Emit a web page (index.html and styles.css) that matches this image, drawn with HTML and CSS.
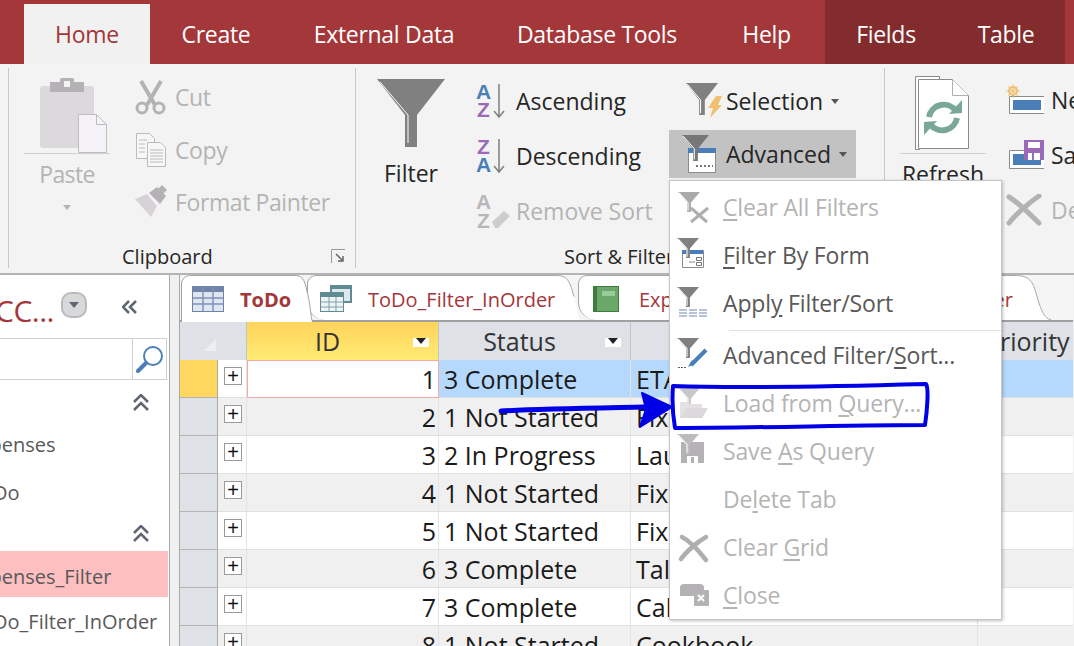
FILE: index.html
```html
<!DOCTYPE html>
<html lang="en">
<head>
<meta charset="utf-8">
<title>Access - ToDo</title>
<link rel="stylesheet" href="styles.css">
</head>
<body>
<svg class="defs" aria-hidden="true">
  <symbol id="funnel" viewBox="0 0 68 68" preserveAspectRatio="none">
    <polygon points="0,0 68,0 40,36 40,68 28,68 28,36" fill="currentColor"/>
    <polyline points="3,3 31,36 31,64" fill="none" stroke="#fff" stroke-width="1" vector-effect="non-scaling-stroke"/>
  </symbol>
</svg>
<div class="app">
  <nav class="tabbar">
    <a class="tabbar-item tabbar-home">Home</a>
    <a class="tabbar-item tabbar-create">Create</a>
    <a class="tabbar-item tabbar-ext">External Data</a>
    <a class="tabbar-item tabbar-db">Database Tools</a>
    <a class="tabbar-item tabbar-help">Help</a>
    <div class="tabbar-context">
      <a class="tabbar-item tabbar-fields">Fields</a>
      <a class="tabbar-item tabbar-table">Table</a>
    </div>
  </nav>

  <section class="ribbon">
    <div class="group group-clip">
      <div class="group-body">
        <div class="paste">
          <div class="paste-icon">
            <svg width="70" height="78" viewBox="0 0 70 78"><rect x="1" y="10" width="54" height="62" rx="3" fill="#dcd9dc"/><path d="M11 6h10V3a3 3 0 0 1 3-1h8a3 3 0 0 1 3 1v3h10v10H11z" fill="#b5b2b5"/><rect x="25" y="5" width="6" height="6" fill="#f3f3f3"/><path d="M39.500 38.500h18l10 10v28h-28z" fill="#f5f3f7" stroke="#bdbdbd"/><path d="M57.500 38.500v10h10" fill="none" stroke="#bdbdbd"/></svg>
          </div>
          <span class="paste-label">Paste</span>
          <span class="caret caret-light"></span>
        </div>
        <div class="small-col">
          <div class="small-btn disabled">
            <svg class="small-icon" width="32" height="36" viewBox="0 0 32 36"><g fill="none" stroke="#b5b2b5"><path d="M6 2l14 24M26 2L12 26" stroke-width="4"/><circle cx="7" cy="29" r="5" stroke-width="3"/><circle cx="24" cy="29" r="5" stroke-width="3"/></g></svg>
            <span>Cut</span>
          </div>
          <div class="small-btn disabled">
            <svg class="small-icon" width="32" height="36" viewBox="0 0 32 36"><g fill="#f7f7f7" stroke="#bdb9bd"><path d="M1.500 1.500h13l5 5v20h-18z"/><path d="M12.500 10.500h13l5 5v19h-18z"/><path d="M4 8h8M4 12h6M4 16h6M4 20h6M15 18h13M15 21h13M15 24h13M15 27h13M15 30h13" fill="none"/></g></svg>
            <span>Copy</span>
          </div>
          <div class="small-btn disabled">
            <svg class="small-icon" width="32" height="36" viewBox="0 0 32 36"><path d="M0 15l12-5 10 12-6 11z" fill="#d6d2d6"/><path d="M14 9l8-6 9 9-6 8z" fill="#b5b2b5"/><path d="M22 6l5-5 5 5-5 5z" fill="#b5b2b5"/></svg>
            <span>Format Painter</span>
          </div>
        </div>
      </div>
      <div class="group-foot foot-clip">
        <span class="foot-label">Clipboard</span>
        <svg class="launcher" width="15" height="15" viewBox="0 0 15 15"><path d="M.5 14V.5H14" fill="none" stroke="#9a9a9a"/><path d="M5 5l6 6M12 7v5H7" fill="none" stroke="#666" stroke-width="1.500"/></svg>
      </div>
    </div>

    <div class="group group-sort">
      <div class="group-body">
        <div class="filter-col">
          <svg class="filter-big" width="68" height="68"><use href="#funnel"/></svg>
          <span>Filter</span>
        </div>
        <div class="sort-col">
          <div class="sort-btn">
            <svg class="small-icon" width="30" height="38" viewBox="0 0 30 38"><text x="0" y="17" class="az az-blue">A</text><text x="1" y="35" class="az az-purple">Z</text><path d="M23 2v33M18 29l5 6 5-6" fill="none" stroke="#808080" stroke-width="1.500"/></svg>
            <span>Ascending</span>
          </div>
          <div class="sort-btn">
            <svg class="small-icon" width="30" height="38" viewBox="0 0 30 38"><text x="1" y="17" class="az az-purple">Z</text><text x="0" y="35" class="az az-blue">A</text><path d="M23 2v33M18 29l5 6 5-6" fill="none" stroke="#808080" stroke-width="1.500"/></svg>
            <span>Descending</span>
          </div>
          <div class="sort-btn disabled">
            <svg class="small-icon sort-wide" width="34" height="38" viewBox="0 0 34 38"><text x="0" y="17" class="az az-grey">A</text><text x="1" y="36" class="az az-grey">Z</text><path d="M16 30l12-11 6 5-12 12h-3z" fill="#cfcccf"/></svg>
            <span>Remove Sort</span>
          </div>
        </div>
        <div class="adv-col">
          <div class="adv-btn">
            <svg class="adv-icon" width="36" height="36" viewBox="0 0 36 36"><svg x="0" y="0" width="32" height="32" color="#808080"><use href="#funnel"/></svg><polygon points="30,13 36,13 32,22 36,22 24,35 27,25 22,25" fill="#f0c070"/></svg>
            <span>Selection</span><span class="caret"></span>
          </div>
          <div class="adv-btn active">
            <svg class="adv-icon" width="34" height="38" viewBox="0 0 34 38"><path d="M6.500 13.500h27v24h-27z" fill="#fff" stroke="#8a8a8a"/><rect x="6" y="13" width="28" height="5" fill="#4a7eb8"/><path d="M14 31h17" stroke="#777" stroke-width="2" stroke-dasharray="2 2"/><svg x="0" y="0" width="27" height="26" color="#777"><use href="#funnel"/></svg></svg>
            <span>Advanced</span><span class="caret"></span>
          </div>
        </div>
      </div>
      <div class="group-foot foot-sort"><span class="foot-label">Sort &amp; Filter</span></div>
    </div>

    <div class="group group-rec">
      <div class="group-body">
        <div class="refresh-col">
          <div class="refresh-icon">
            <svg width="56" height="74" viewBox="0 0 56 74"><path d="M.5.500h24v3H4.500v70h-4z" fill="#fff" stroke="#8a8a8a"/><path d="M3.500 3.500h34l16 16v53h-50z" fill="#fff" stroke="#8a8a8a"/><path d="M37.500 3.500v16h16" fill="#fff" stroke="#b0b0b0"/><g fill="none" stroke="#7aa898" stroke-width="6"><path d="M14 41a15 15 0 0 1 27-6"/><path d="M42 42a15 15 0 0 1-27 6"/></g><path d="M34 38l13-1V24z" fill="#7aa898"/><path d="M22 45l-13 1v13z" fill="#7aa898"/></svg>
          </div>
          <span>Refresh</span>
        </div>
        <div class="rec-col">
          <div class="rec-btn">
            <svg class="rec-icon" width="38" height="32" viewBox="0 0 38 32"><path d="M3.500 12.500h35v17h-35z" fill="#fff" stroke="#8a8a8a"/><rect x="7" y="16" width="28" height="10" fill="#4a7eb8"/><circle cx="7" cy="7" r="4" fill="none" stroke="#f0c070" stroke-width="2"/><path d="M7 0v14M0 7h14M2 2l10 10M12 2L2 12" stroke="#f0c070"/></svg>
            <span>New</span>
          </div>
          <div class="rec-btn">
            <svg class="rec-icon" width="38" height="32" viewBox="0 0 38 32"><path d="M3.500 11.500h35v18h-35z" fill="#fff" stroke="#8a8a8a"/><rect x="7" y="15" width="28" height="11" fill="#4a7eb8"/><path d="M18 1h20v20H18z" fill="#9a6ab8"/><rect x="22" y="3" width="12" height="6" fill="#fff"/><rect x="22" y="14" width="12" height="7" fill="#fff"/><rect x="26" y="14" width="2" height="7" fill="#9a6ab8"/></svg>
            <span>Save</span>
          </div>
          <div class="rec-btn disabled">
            <svg class="rec-icon" width="38" height="32" viewBox="0 0 38 32"><path d="M3 3c10 6 20 16 30 26M33 2C24 8 10 20 3 29" fill="none" stroke="#b5b2b5" stroke-width="5" stroke-linecap="round"/></svg>
            <span>Delete</span>
          </div>
        </div>
      </div>
    </div>
  </section>

  <div class="workspace">
    <aside class="nav">
      <div class="nav-head">
        <span class="nav-title">CC...</span>
        <span class="nav-drop"><span class="nav-drop-tri"></span></span>
        <svg class="nav-collapse" width="16" height="14" viewBox="0 0 16 14"><path d="M7 1L1 7l6 6M14 1L8 7l6 6" fill="none" stroke="#5f6672" stroke-width="2.500"/></svg>
      </div>
      <div class="nav-search">
        <span class="nav-search-input"></span>
        <span class="nav-search-btn">
          <svg width="28" height="28" viewBox="0 0 28 28"><circle cx="17" cy="11" r="9" fill="none" stroke="#4a7eb8" stroke-width="2"/><path d="M10 18L2 26" stroke="#4a7eb8" stroke-width="4" stroke-linecap="round"/></svg>
        </span>
      </div>
      <div class="nav-section">
        <svg width="16" height="17" viewBox="0 0 16 17"><path d="M1 8l7-7 7 7M1 16l7-7 7 7" fill="none" stroke="#5f6672" stroke-width="2.500"/></svg>
      </div>
      <div class="nav-item"><span class="clip-a">Expenses</span></div>
      <div class="nav-item"><span class="clip-b">ToDo</span></div>
      <div class="nav-section nav-section-2">
        <svg width="16" height="17" viewBox="0 0 16 17"><path d="M1 8l7-7 7 7M1 16l7-7 7 7" fill="none" stroke="#5f6672" stroke-width="2.500"/></svg>
      </div>
      <div class="nav-item selected"><span class="clip-a">Expenses_Filter</span></div>
      <div class="nav-item"><span class="clip-b">ToDo_Filter_InOrder</span></div>
    </aside>
    <main class="main">
      <div class="doc-tabs">
        <div class="doc-tab active tab-1">
          <svg class="doc-icon" width="32" height="26" viewBox="0 0 32 26"><rect width="32" height="26" fill="#6d83a8"/><path d="M1 6h30v19H1z" fill="#dfe6f2"/><path d="M1 12h30M1 18h30M11 1v24M21 1v24" stroke="#7f94b6" stroke-width="1.500"/></svg>
          <span class="doc-name">ToDo</span>
          <svg class="doc-curve" width="18" height="47" viewBox="0 0 18 47"><path d="M0 .5c9 0 10 7 13 20 3 13 3 26.500 5 26.500H0z" fill="#fff"/><path d="M0 .5c9 0 10 7 13 20 3 13 3 26 5 26" fill="none" stroke="#a8a296"/></svg>
        </div>
        <div class="doc-tab tab-2">
          <svg class="doc-icon" width="32" height="30" viewBox="0 0 32 30"><rect x="10" y="1" width="22" height="18" fill="#5f8c93"/><rect x="12" y="5" width="18" height="12" fill="#dce8ea"/><rect y="8" width="24" height="20" fill="#5f8c93"/><path d="M1 13h22v14H1z" fill="#eef3f4"/><path d="M1 18h22M1 23h22M9 13v14M16 13v14" stroke="#7da3a9"/></svg>
          <span class="doc-name">ToDo_Filter_InOrder</span>
          <svg class="doc-curve" width="24" height="45" viewBox="0 0 24 45"><path d="M0 .5c12 0 13 8 17 21 3 11 4 23.500 7 23.500H0z" fill="#fff"/><path d="M0 .5c12 0 13 8 17 21" fill="none" stroke="#a8a8a8"/></svg>
        </div>
        <div class="doc-tab tab-3">
          <svg class="doc-icon" width="26" height="26" viewBox="0 0 26 26"><rect width="26" height="26" fill="#3f7a3f"/><rect x="4" y="1" width="21" height="24" fill="#6aa86a"/><rect x="9" y="5" width="13" height="5" fill="#9acb9a"/></svg>
          <span class="doc-name">Exp</span>
          <span class="doc-name doc-name-end">er</span>
          <svg class="doc-curve" width="36" height="45" viewBox="0 0 36 45"><path d="M0 .5c10 0 16 2 20 14 4 14 8 30.500 16 30.500H0z" fill="#fff"/><path d="M0 .5c10 0 16 2 20 14 4 14 8 30 16 30" fill="none" stroke="#a8a8a8"/></svg>
        </div>
      </div>
      <table class="grid">
        <colgroup><col class="c-sel"><col class="c-exp"><col class="c-id"><col class="c-status"><col class="c-title"><col class="c-pri"></colgroup>
        <thead>
          <tr>
            <th class="sel-head" colspan="2"><svg class="corner" width="12" height="12" viewBox="0 0 12 12"><path d="M12 0v12H0z" fill="#eceef1"/></svg></th>
            <th class="id-head"><span>ID</span><span class="filter-tri"></span></th>
            <th><span>Status</span><span class="filter-tri"></span></th>
            <th></th>
            <th class="pri-head">Priority</th>
          </tr>
        </thead>
        <tbody>
          <tr class="current"><td class="sel"></td><td class="exp"><span class="plus">+</span></td><td class="num">1</td><td>3 Complete</td><td>ETA</td><td></td></tr>
          <tr><td class="sel"></td><td class="exp"><span class="plus">+</span></td><td class="num">2</td><td>1 Not Started</td><td>Fix</td><td></td></tr>
          <tr><td class="sel"></td><td class="exp"><span class="plus">+</span></td><td class="num">3</td><td>2 In Progress</td><td>Lau</td><td></td></tr>
          <tr><td class="sel"></td><td class="exp"><span class="plus">+</span></td><td class="num">4</td><td>1 Not Started</td><td>Fix</td><td></td></tr>
          <tr><td class="sel"></td><td class="exp"><span class="plus">+</span></td><td class="num">5</td><td>1 Not Started</td><td>Fix</td><td></td></tr>
          <tr><td class="sel"></td><td class="exp"><span class="plus">+</span></td><td class="num">6</td><td>3 Complete</td><td>Tal</td><td></td></tr>
          <tr><td class="sel"></td><td class="exp"><span class="plus">+</span></td><td class="num">7</td><td>3 Complete</td><td>Cal</td><td></td></tr>
          <tr><td class="sel"></td><td class="exp"><span class="plus">+</span></td><td class="num">8</td><td>1 Not Started</td><td>Cookbook</td><td></td></tr>
        </tbody>
      </table>
    </main>
  </div>

  <div class="menu">
    <div class="menu-item disabled">
      <svg class="menu-icon" width="34" height="40" viewBox="0 0 34 40"><svg x="1" y="4" width="22" height="20" color="#aaa"><use href="#funnel"/></svg><path d="M14 20l16 14M31 20L14 34" stroke="#b0aeb0" stroke-width="3"/></svg>
      <span><u>C</u>lear All Filters</span>
    </div>
    <div class="menu-item">
      <svg class="menu-icon" width="34" height="40" viewBox="0 0 34 40"><path d="M5.500 14.500h21v17h-21z" fill="#fff" stroke="#8a8a8a"/><rect x="5" y="14" width="21" height="4" fill="#4a7eb8"/><path d="M12 26h6" stroke="#888"/><path d="M19.500 21.500h5v3h-5zM19.500 26.500h5v3h-5z" fill="#fff" stroke="#777"/><svg x="0" y="2" width="22" height="20" color="#808080"><use href="#funnel"/></svg></svg>
      <span><u>F</u>ilter By Form</span>
    </div>
    <div class="menu-item">
      <svg class="menu-icon" width="34" height="40" viewBox="0 0 34 40"><svg x="0" y="3" width="22" height="20" color="#808080"><use href="#funnel"/></svg><path d="M2 26h8M12 26h8M22 26h8M2 29h8M12 29h8M22 29h8M2 32h8M12 32h8M22 32h8" stroke="#6a87b0"/></svg>
      <span>Appl<u>y</u> Filter/Sort</span>
    </div>
    <div class="menu-sep"></div>
    <div class="menu-item">
      <svg class="menu-icon" width="34" height="40" viewBox="0 0 34 40"><svg x="0" y="2" width="22" height="20" color="#808080"><use href="#funnel"/></svg><path d="M29 14L14 29" stroke="#4a7eb8" stroke-width="4"/><path d="M15 24l-4 7 7-3z" fill="#4a7eb8"/><path d="M1 31.500h9" stroke="#666" stroke-dasharray="2 1"/></svg>
      <span>Advanced Filter/<u>S</u>ort...</span>
    </div>
    <div class="menu-item disabled">
      <svg class="menu-icon" width="34" height="40" viewBox="0 0 34 40"><svg x="1" y="4" width="22" height="20" color="#c8c8c8"><use href="#funnel"/></svg><path d="M3 18h8l2 2h12v4H9l-6 10z" fill="#e4e0e4"/><path d="M9 24h22l-6 10H3z" fill="#dcd8dc"/></svg>
      <span>Load from <u>Q</u>uery...</span>
    </div>
    <div class="menu-item disabled">
      <svg class="menu-icon" width="34" height="40" viewBox="0 0 34 40"><path d="M4 10h23v21H4z" fill="#b5b2b5"/><rect x="10" y="24" width="11" height="7" fill="#fff"/><rect x="14" y="25" width="3" height="6" fill="#b5b2b5"/><svg x="0" y="2" width="22" height="20" color="#bdbbbd"><use href="#funnel"/></svg></svg>
      <span>Save <u>A</u>s Query</span>
    </div>
    <div class="menu-item disabled">
      <span class="menu-icon-empty"></span>
      <span>De<u>l</u>ete Tab</span>
    </div>
    <div class="menu-item disabled">
      <svg class="menu-icon" width="34" height="40" viewBox="0 0 34 40"><path d="M5 9c8 4 17 14 24 23M29 9C20 14 9 24 4 31" fill="none" stroke="#b0aeb0" stroke-width="4.500" stroke-linecap="round"/></svg>
      <span>Clear <u>G</u>rid</span>
    </div>
    <div class="menu-item disabled">
      <svg class="menu-icon" width="34" height="40" viewBox="0 0 34 40"><path d="M3 12a4 4 0 0 1 4-4h16a4 4 0 0 1 4 4v2h-6v6H3z" fill="#b5b2b5"/><rect x="17" y="14" width="15" height="16" rx="1" fill="#b5b2b5"/><path d="M21 19l6 6M27 19l-6 6" stroke="#fff" stroke-width="2"/></svg>
      <span><u>C</u>lose</span>
    </div>
  </div>

  <svg class="annotation" width="1074" height="646" viewBox="0 0 1074 646">
    <path d="M501 411C540 409 600 408 645 407" fill="none" stroke="#0000e6" stroke-width="5" stroke-linecap="round"/>
    <path d="M642 393l30 14-32 20 6-18z" fill="#0000e6" stroke="#0000e6" stroke-width="2" stroke-linejoin="round"/>
    <path d="M673 386c60 2 180 0 253-2 3 4 1 28-1 41-60 0-180 3-250 3-2-12-3-30-2-42z" fill="none" stroke="#0000e6" stroke-width="4" stroke-linejoin="round"/>
  </svg>
</div>
</body>
</html>
```
FILE: styles.css
```css
* { box-sizing: border-box; }
html, body { margin: 0; padding: 0; }
body { font-family: "Open Sans", "Noto Sans", sans-serif; color: #262626; background: #fff; }
.defs { display: none; }
.app { position: relative; width: 1074px; height: 646px; overflow: hidden; display: flex; flex-direction: column; font-size: 23px; }

/* Title tabs */
.tabbar { flex: none; height: 64px; background: #a4373a; display: flex; align-items: flex-end; color: #fff; letter-spacing: -.3px; }
.tabbar-item { flex: none; display: flex; align-items: center; justify-content: center; height: 60px; }
.tabbar-home { margin-left: 24px; width: 126px; background: #f1f1f1; color: #a4373a; }
.tabbar-create { width: 132px; }
.tabbar-ext { width: 204px; }
.tabbar-db { width: 222px; }
.tabbar-help { width: 117px; }
.tabbar-context { flex: none; display: flex; align-self: stretch; align-items: flex-end; background: #822c2e; width: 240px; }
.tabbar-fields { width: 122px; }
.tabbar-table { width: 118px; }

/* Ribbon */
.ribbon { flex: none; height: 211px; background: #f3f3f3; border-bottom: 2px solid #b4b4b4; display: flex; padding: 4px 0 5px 8px; }
.group { flex: none; display: flex; flex-direction: column; border-left: 1px solid #c8c8c8; }
.group-clip { width: 347px; }
.group-sort { width: 529px; }
.group-rec { width: 190px; }
.group-body { flex: 1; display: flex; min-height: 0; }
.group-foot { flex: none; height: 24px; display: flex; align-items: center; font-size: 20px; }
.foot-clip { padding-left: 113px; }
.foot-sort { padding-left: 208px; }
.launcher { margin-left: 118px; }
.disabled { color: #b4b4b4; }
.small-icon { flex: none; }

.paste { width: 86px; margin-left: 15px; display: flex; flex-direction: column; align-items: center; color: #b4b4b4; }
.paste-icon { width: 86px; height: 86px; padding: 8px 0 0 15px; border-bottom: 1px solid #d0d0d0; display: flex; }
.paste-label { margin-top: 3px; line-height: 34px; letter-spacing: -.6px; }
.caret { flex: none; width: 0; height: 0; border: 4px solid transparent; border-top: 5px solid #555; border-bottom: 0; }
.caret-light { border-top-color: #b4b4b4; margin-top: 14px; }

.small-col { margin-left: 25px; padding-top: 3px; display: flex; flex-direction: column; letter-spacing: -.4px; }
.small-btn { height: 52.500px; display: flex; align-items: center; gap: 8px; }

.filter-col { flex: none; width: 120px; padding: 11px 0 0 21px; display: flex; flex-direction: column; align-items: flex-start; }
.filter-big { color: #808080; }
.filter-col span { width: 68px; text-align: center; margin-top: 9px; line-height: 34px; }
.sort-col { flex: none; width: 193px; padding-top: 5px; display: flex; flex-direction: column; }
.sort-btn { height: 55px; display: flex; align-items: center; gap: 10px; }
.sort-wide { margin-right: -4px; }
.az { font: 700 21px "Liberation Sans", sans-serif; }
.az-blue { fill: #4a7eb8; }
.az-purple { fill: #9a6ab8; }
.az-grey { fill: #b9b6b9; }
.adv-col { flex: none; width: 187px; padding-top: 7px; display: flex; flex-direction: column; gap: 3px; }
.adv-btn { height: 52px; display: flex; align-items: center; padding-left: 17px; }
.adv-btn.active { height: 48px; background: #c2c2c2; padding-left: 13px; }
.adv-icon { flex: none; margin-right: 4px; }
.adv-btn.active .adv-icon { margin-right: 10px; }
.adv-btn .caret { margin-left: 8px; }

.refresh-col { width: 86px; margin-left: 15px; display: flex; flex-direction: column; align-items: center; }
.refresh-icon { width: 86px; height: 86px; padding: 8px 0 0 15px; border-bottom: 1px solid #d0d0d0; display: flex; }
.refresh-col span { line-height: 40px; }
.rec-col { margin-left: 20px; padding-top: 4px; display: flex; flex-direction: column; }
.rec-btn { height: 55px; display: flex; align-items: center; gap: 7px; white-space: nowrap; }
.rec-icon { flex: none; }

/* Workspace */
.workspace { flex: 1; min-height: 0; display: flex; background: #f0f0f0; }
.nav { flex: none; width: 170px; background: #fff; border-right: 1px solid #a8a8a8; display: flex; flex-direction: column; overflow: hidden; color: #595959; font-size: 20px; }
.nav-head { flex: none; height: 63px; display: flex; align-items: center; }
.nav-title { font-size: 30px; color: #a4373a; margin-left: -5px; margin-top: 8px; width: 66px; white-space: nowrap; letter-spacing: -.5px; }
.nav-drop { flex: none; width: 26px; height: 26px; border-radius: 10px; background: #d8d9db; border: 2px solid #b8babd; display: flex; align-items: center; justify-content: center; margin-top: -3px; }
.nav-drop-tri { width: 0; height: 0; border: 5px solid transparent; border-top: 6px solid #5f6672; border-bottom: 0; }
.nav-collapse { flex: none; margin-left: 35px; }
.nav-search { flex: none; height: 42px; width: 167px; border: 1px solid #d0d0d0; border-left: 0; display: flex; }
.nav-search-input { width: 133px; border-right: 1px solid #d0d0d0; }
.nav-search-btn { flex: 1; display: flex; align-items: center; justify-content: center; }
.nav-section { flex: none; height: 40px; display: flex; align-items: flex-start; padding: 14px 0 0 133px; }
.nav-section-2 { height: 35px; padding-top: 9px; }
.nav-item { flex: none; height: 48px; display: flex; align-items: center; white-space: nowrap; }
.nav-item.selected { background: #fdbfc0; height: 46px; width: 168px; padding-top: 4px; }
.clip-a { margin-left: -32px; }
.clip-b { margin-left: -30px; }

.main { flex: none; width: 894px; margin-left: 9px; border-left: 1px solid #a8a8a8; display: flex; flex-direction: column; overflow: hidden; position: relative; }
.doc-tabs { flex: none; height: 47px; background: #f5f5f5; border-bottom: 2px solid #a0a0a0; display: flex; align-items: flex-start; padding-left: 1px; color: #a4373a; font-size: 20px; }
.doc-tab { flex: none; position: relative; display: flex; align-items: center; height: 45px; padding-top: 2px; background: #fff; border-top: 1px solid #a8a8a8; border-left: 1px solid #a8a2a0; border-radius: 9px 0 0 18px; white-space: nowrap; }
.doc-tab.active { height: 47px; padding-top: 0; border-radius: 9px 0 0 0; z-index: 3; }
.doc-curve { position: absolute; left: 100%; top: -1px; }
.doc-icon { flex: none; }
.tab-1 { width: 114px; padding-left: 10px; }
.tab-1 .doc-name { font-weight: 700; margin-left: 16px; }
.tab-2 { width: 250px; margin-left: 12px; padding-left: 12px; z-index: 2; }
.tab-2 .doc-name { margin-left: 16px; }
.tab-3 { width: 437px; margin-left: 21px; padding-left: 14px; padding-right: 2px; z-index: 1; }
.tab-3 .doc-name { margin-left: 20px; }
.tab-3 .doc-name-end { margin-left: auto; }

.grid { flex: none; table-layout: fixed; border-collapse: separate; border-spacing: 0; width: 898px; font-size: 25px; color: #1a1a1a; }
.c-sel { width: 38px; }
.c-exp { width: 29px; }
.c-id, .c-status { width: 192px; }
.c-title { width: 347px; }
.c-pri { width: 100px; }
.grid th { height: 38px; padding: 0 30px 0 0; background: #dee1e6; font-weight: 400; color: #333; border-right: 1px solid #c0c3c8; position: relative; }
.grid th.sel-head { padding: 0; background: #dee1e6; text-align: right; vertical-align: bottom; }
.corner { margin: 0 30px 2px 0; }
.grid th.id-head { background: linear-gradient(#ffd35c, #ffeb72); }
.grid th.pri-head { padding: 0 0 0 7px; text-align: left; border-right: 0; }
.filter-tri { position: absolute; right: 9px; top: 16px; width: 16px; height: 9px; background: #fff; display: flex; justify-content: center; }
.filter-tri::before { content: ""; width: 0; height: 0; border: 5px solid transparent; border-top: 6px solid #222; border-bottom: 0; }
.grid td { height: 38px; padding: 0 0 0 5px; background: #fff; border-right: 1px solid #e4e4e4; border-bottom: 1px solid #e0e0e0; white-space: nowrap; overflow: hidden; line-height: 36px; }
.grid tbody tr:nth-child(even) td { background: #f0f0f0; }
.grid td.sel, .grid tbody tr:nth-child(even) td.sel { background: #dee1e6; border-right: 1px solid #a8a8a8; border-bottom: 1px solid #b4b4b4; padding: 0; }
.grid td.exp { padding: 0 0 0 6px; line-height: 0; vertical-align: top; }
.grid td.num { text-align: right; padding: 0 2px 0 0; }
.grid tr.current td { background: #b5d8fd; }
.grid tr.current td.sel { background: #ffd75e; }
.grid tr.current td.exp { background: #fff; }
.grid tr.current td.num { background: #fff; border: 1px solid #f9a8a8; }
.plus { display: inline-flex; align-items: center; justify-content: center; width: 18px; height: 18px; margin-top: 7px; border: 1px solid #9a9a9a; background: #fff; font: 400 20px/1 "Liberation Sans", sans-serif; color: #111; }

/* Dropdown */
.menu { position: absolute; left: 669px; top: 180px; width: 333px; height: 440px; background: #fff; border: 1px solid #c6c6c6; box-shadow: 1px 1px 3px rgba(0, 0, 0, .25); padding-top: 3px; color: #595959; display: flex; flex-direction: column; z-index: 5; letter-spacing: -.15px; }
.menu-item { flex: none; height: 48px; display: flex; align-items: center; gap: 12px; padding-left: 7px; white-space: nowrap; }
.menu-item > span { margin-top: -2px; }
.menu-item.disabled { color: #b4b4b4; }
.menu-icon, .menu-icon-empty { flex: none; width: 34px; height: 40px; }
.menu-sep { flex: none; height: 4px; margin-left: 59px; border-bottom: 1px solid #e1e1e1; margin-top: -1px; margin-bottom: 1px; }
.menu u { text-underline-offset: 3px; }
.annotation { position: absolute; left: 0; top: 0; z-index: 6; pointer-events: none; }
```
